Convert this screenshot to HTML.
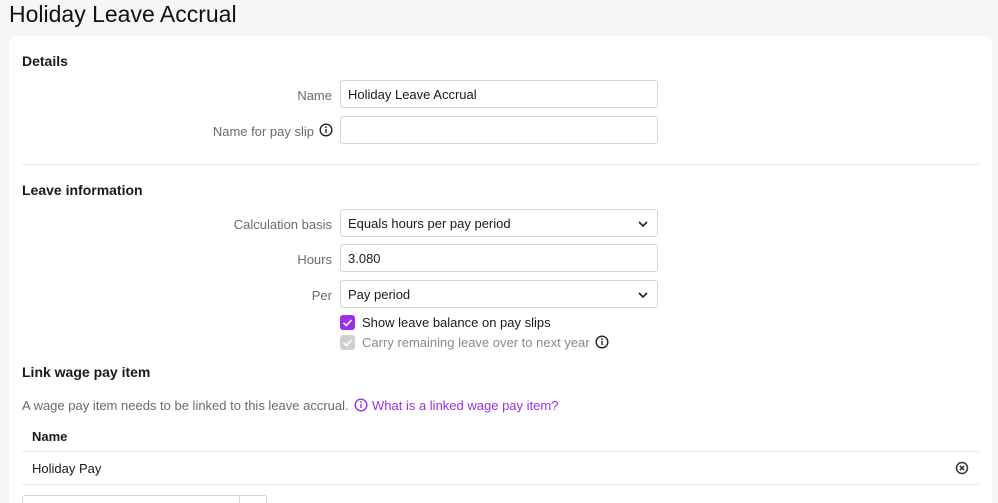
<!DOCTYPE html>
<html><head><style>
html,body{margin:0;width:998px;height:503px;overflow:hidden}
body{background:#f6f6f6;font-family:"Liberation Sans",sans-serif;color:#1a1a1a;position:relative}
.a{position:absolute;white-space:nowrap}
h1{position:absolute;left:9px;top:0;margin:0;font-size:23px;font-weight:normal;line-height:28px;color:#111}
.card{position:absolute;left:9px;top:36px;width:983px;height:467px;background:#fff;border-radius:8px 8px 0 0}
.h{font-size:14px;font-weight:bold;color:#1a1a1a}
.lbl{font-size:13px;color:#6b6b6b;text-align:right;right:666px}
.inp{position:absolute;left:340px;height:26px;border:1px solid #d6d6d6;border-radius:3px;background:#fff;font-size:13px;line-height:28px;padding-left:7px;box-sizing:content-box;width:309px}
.chev{position:absolute;right:8px;top:10px}
.line{position:absolute;height:1px;background:#e6e6e6;left:22px;width:957px}
</style></head><body>
<h1>Holiday Leave Accrual</h1>
<div class="card"></div>
<div class="a h" style="left:22px;top:53px">Details</div>
<div class="a lbl" style="top:88px">Name</div>
<div class="inp" style="top:80px">Holiday Leave Accrual</div>
<div class="a lbl" style="top:124px;right:684px">Name for pay slip</div>
<svg class="a" style="left:319px;top:123px" width="14" height="14" viewBox="0 0 14 14"><circle cx="7" cy="7" r="5.8" fill="none" stroke="#222" stroke-width="1.4"/><rect x="6.3" y="6" width="1.4" height="4" fill="#222"/><circle cx="7" cy="4.2" r=".9" fill="#222"/></svg>
<div class="inp" style="top:116px"></div>
<div class="line" style="top:164px"></div>
<div class="a h" style="left:22px;top:182px">Leave information</div>
<div class="a lbl" style="top:217px">Calculation basis</div>
<div class="inp" style="top:209px">Equals hours per pay period<svg class="chev" width="12" height="8" viewBox="0 0 12 8"><path d="M2 2l4 4 4-4" fill="none" stroke="#222" stroke-width="1.6"/></svg></div>
<div class="a lbl" style="top:252px">Hours</div>
<div class="inp" style="top:244px">3.080</div>
<div class="a lbl" style="top:288px">Per</div>
<div class="inp" style="top:280px">Pay period<svg class="chev" width="12" height="8" viewBox="0 0 12 8"><path d="M2 2l4 4 4-4" fill="none" stroke="#222" stroke-width="1.6"/></svg></div>
<svg class="a" style="left:340px;top:315px" width="15" height="15"><rect width="15" height="15" rx="3" fill="#9b30e6"/><path d="M3.5 7.8l2.8 2.7 5.2-5.5" fill="none" stroke="#fff" stroke-width="1.6"/></svg>
<div class="a" style="left:362px;top:315px;font-size:13px">Show leave balance on pay slips</div>
<svg class="a" style="left:340px;top:335px" width="15" height="15"><rect width="15" height="15" rx="3" fill="#d0d0d0"/><path d="M3.5 7.8l2.8 2.7 5.2-5.5" fill="none" stroke="#fff" stroke-width="1.6"/></svg>
<div class="a" style="left:362px;top:335px;font-size:13px;color:#8a8a8a">Carry remaining leave over to next year</div>
<svg class="a" style="left:595px;top:335px" width="14" height="14" viewBox="0 0 14 14"><circle cx="7" cy="7" r="5.8" fill="none" stroke="#222" stroke-width="1.4"/><rect x="6.3" y="6" width="1.4" height="4" fill="#222"/><circle cx="7" cy="4.2" r=".9" fill="#222"/></svg>
<div class="a h" style="left:22px;top:364px">Link wage pay item</div>
<div class="a" style="left:22px;top:398px;font-size:13px;color:#6b6b6b">A wage pay item needs to be linked to this leave accrual.</div>
<svg class="a" style="left:354px;top:398px" width="14" height="14" viewBox="0 0 14 14"><circle cx="7" cy="7" r="5.8" fill="none" stroke="#9b30e6" stroke-width="1.4"/><rect x="6.3" y="6" width="1.4" height="4" fill="#9b30e6"/><circle cx="7" cy="4.2" r=".9" fill="#9b30e6"/></svg>
<div class="a" style="left:372px;top:398px;font-size:13px;color:#9b30e6">What is a linked wage pay item?</div>
<div class="a" style="left:32px;top:429px;font-size:13px;font-weight:bold">Name</div>
<div class="line" style="top:451px"></div>
<div class="a" style="left:32px;top:461px;font-size:13px">Holiday Pay</div>
<svg class="a" style="left:955px;top:461px" width="14" height="14" viewBox="0 0 14 14"><circle cx="7" cy="7" r="5.5" fill="none" stroke="#333" stroke-width="1.5"/><path d="M4.8 4.8l4.4 4.4M9.2 4.8l-4.4 4.4" stroke="#333" stroke-width="1.5"/></svg>
<div class="line" style="top:484px"></div>
<div class="a" style="left:22px;top:495px;width:243px;height:8px;border:1px solid #d6d6d6;border-bottom:none;border-radius:3px 3px 0 0"></div>
<div class="a" style="left:239px;top:495px;width:1px;height:8px;background:#d6d6d6"></div>
</body></html>
